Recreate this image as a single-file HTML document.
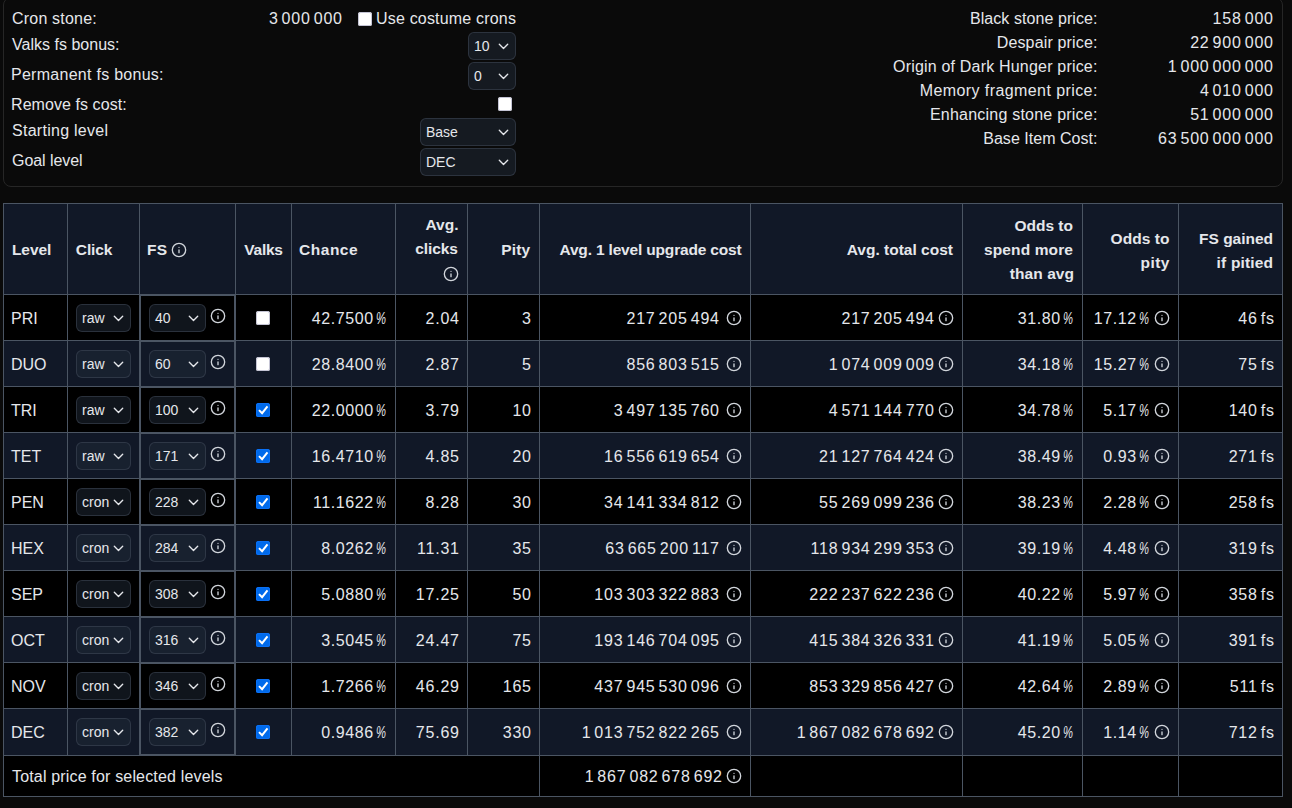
<!DOCTYPE html>
<html><head><meta charset="utf-8"><style>
*{box-sizing:border-box}
html,body{margin:0;padding:0;background:#0a0a0a;width:1292px;height:808px;overflow:hidden}
body{position:relative;font-family:"Liberation Sans",sans-serif;font-size:16px;color:#e5e7eb}
.t{position:absolute;white-space:pre;line-height:24px}
.r{position:absolute}
.n{letter-spacing:0.8px;margin-right:-0.8px}
.sp{display:inline-block;width:3px}
.pc{display:inline-block;width:11.4px;position:relative;height:1em}
.pc b{position:absolute;left:0;top:-1px;font-weight:normal;display:inline-block;transform:scaleX(0.70);transform-origin:left center;letter-spacing:0}
.ic{position:absolute;overflow:visible}
.panel{position:absolute;left:3px;top:-3px;width:1280px;height:190px;border:1px solid #262626;border-radius:8px;background:#0a0a0a}
.sel{position:absolute;border:1px solid rgba(75,85,99,0.45);border-radius:6px;background:rgba(31,41,55,0.5)}
.sel span{position:absolute;left:5px;top:50%;transform:translateY(-50%);line-height:16px;white-space:pre}
.chev{position:absolute;right:5.75px;top:50%;margin-top:-3.5px}
.cb{position:absolute;width:14px;height:14px;background:#fff;border-radius:2.5px;box-shadow:inset 0 0 0 1px #c4c4d4}
.cb.on{background:#006aeb;box-shadow:inset 0 0 0 1px #0a70f5}
.cb svg{position:absolute;left:0;top:0}
</style></head>
<body>
<div class="panel"></div>
<div class="t" style="top:7px;left:12px;letter-spacing:0.200px;">Cron stone:</div>
<div class="t" style="top:33px;left:12px;letter-spacing:0.015px;">Valks fs bonus:</div>
<div class="t" style="top:63px;left:12px;transform:translateX(-1.0px);letter-spacing:0.273px;">Permanent fs bonus:</div>
<div class="t" style="top:93px;left:12px;transform:translateX(-1.0px);letter-spacing:0.071px;">Remove fs cost:</div>
<div class="t" style="top:119px;left:12px;letter-spacing:0.269px;">Starting level</div>
<div class="t" style="top:149px;left:12px;letter-spacing:-0.056px;">Goal level</div>
<div class="t n" style="top:7px;right:950px;">3<i class="sp"></i>000<i class="sp"></i>000</div>
<div class="cb" style="left:358px;top:12px"></div>
<div class="t" style="top:7px;left:377px;transform:translateX(-1.0px);letter-spacing:0.188px;">Use costume crons</div>
<div class="sel" style="left:468px;top:32px;width:48px;height:28px;"><span style="font-size:14px">10</span><svg class="chev" width="11" height="7" viewBox="0 0 11 7"><path d="M1.3 1.3l4.2 4.2 4.2-4.2" fill="none" stroke="#e5e7eb" stroke-width="1.35" stroke-linecap="round" stroke-linejoin="round"/></svg></div>
<div class="sel" style="left:468px;top:62px;width:48px;height:28px;"><span style="font-size:14px">0</span><svg class="chev" width="11" height="7" viewBox="0 0 11 7"><path d="M1.3 1.3l4.2 4.2 4.2-4.2" fill="none" stroke="#e5e7eb" stroke-width="1.35" stroke-linecap="round" stroke-linejoin="round"/></svg></div>
<div class="cb" style="left:498px;top:97px"></div>
<div class="sel" style="left:420px;top:118px;width:96px;height:28px;"><span style="font-size:14px">Base</span><svg class="chev" width="11" height="7" viewBox="0 0 11 7"><path d="M1.3 1.3l4.2 4.2 4.2-4.2" fill="none" stroke="#e5e7eb" stroke-width="1.35" stroke-linecap="round" stroke-linejoin="round"/></svg></div>
<div class="sel" style="left:420px;top:148px;width:96px;height:28px;"><span style="font-size:14px">DEC</span><svg class="chev" width="11" height="7" viewBox="0 0 11 7"><path d="M1.3 1.3l4.2 4.2 4.2-4.2" fill="none" stroke="#e5e7eb" stroke-width="1.35" stroke-linecap="round" stroke-linejoin="round"/></svg></div>
<div class="t" style="top:7px;right:195px;transform:translateX(0.4px);letter-spacing:0.071px;margin-right:-0.071px;">Black stone price:</div>
<div class="t n" style="top:7px;right:19px;">158<i class="sp"></i>000</div>
<div class="t" style="top:31px;right:195px;transform:translateX(0.4px);letter-spacing:0.154px;margin-right:-0.154px;">Despair price:</div>
<div class="t n" style="top:31px;right:19px;">22<i class="sp"></i>900<i class="sp"></i>000</div>
<div class="t" style="top:55px;right:195px;transform:translateX(0.4px);letter-spacing:0.193px;margin-right:-0.193px;">Origin of Dark Hunger price:</div>
<div class="t n" style="top:55px;right:19px;">1<i class="sp"></i>000<i class="sp"></i>000<i class="sp"></i>000</div>
<div class="t" style="top:79px;right:195px;transform:translateX(0.4px);letter-spacing:0.419px;margin-right:-0.419px;">Memory fragment price:</div>
<div class="t n" style="top:79px;right:19px;">4<i class="sp"></i>010<i class="sp"></i>000</div>
<div class="t" style="top:103px;right:195px;transform:translateX(0.4px);letter-spacing:0.223px;margin-right:-0.223px;">Enhancing stone price:</div>
<div class="t n" style="top:103px;right:19px;">51<i class="sp"></i>000<i class="sp"></i>000</div>
<div class="t" style="top:127px;right:195px;transform:translateX(0.4px);letter-spacing:0.022px;margin-right:-0.022px;">Base Item Cost:</div>
<div class="t n" style="top:127px;right:19px;">63<i class="sp"></i>500<i class="sp"></i>000<i class="sp"></i>000</div>
<div class="r" style="left:3px;top:203px;width:1280px;height:91px;background:#111827;"></div>
<div class="r" style="left:3px;top:294px;width:1280px;height:46px;background:#000;"></div>
<div class="r" style="left:3px;top:340px;width:1280px;height:46px;background:#111827;"></div>
<div class="r" style="left:3px;top:386px;width:1280px;height:46px;background:#000;"></div>
<div class="r" style="left:3px;top:432px;width:1280px;height:46px;background:#111827;"></div>
<div class="r" style="left:3px;top:478px;width:1280px;height:46px;background:#000;"></div>
<div class="r" style="left:3px;top:524px;width:1280px;height:46px;background:#111827;"></div>
<div class="r" style="left:3px;top:570px;width:1280px;height:46px;background:#000;"></div>
<div class="r" style="left:3px;top:616px;width:1280px;height:46px;background:#111827;"></div>
<div class="r" style="left:3px;top:662px;width:1280px;height:46px;background:#000;"></div>
<div class="r" style="left:3px;top:708px;width:1280px;height:47px;background:#111827;"></div>
<div class="r" style="left:3px;top:755px;width:1280px;height:41px;background:#000;"></div>
<div class="r" style="left:3px;top:203px;width:1280px;height:1px;background:#4b5563;"></div>
<div class="r" style="left:3px;top:294px;width:1280px;height:1px;background:#4b5563;"></div>
<div class="r" style="left:3px;top:340px;width:1280px;height:1px;background:#4b5563;"></div>
<div class="r" style="left:3px;top:386px;width:1280px;height:1px;background:#4b5563;"></div>
<div class="r" style="left:3px;top:432px;width:1280px;height:1px;background:#4b5563;"></div>
<div class="r" style="left:3px;top:478px;width:1280px;height:1px;background:#4b5563;"></div>
<div class="r" style="left:3px;top:524px;width:1280px;height:1px;background:#4b5563;"></div>
<div class="r" style="left:3px;top:570px;width:1280px;height:1px;background:#4b5563;"></div>
<div class="r" style="left:3px;top:616px;width:1280px;height:1px;background:#4b5563;"></div>
<div class="r" style="left:3px;top:662px;width:1280px;height:1px;background:#4b5563;"></div>
<div class="r" style="left:3px;top:708px;width:1280px;height:1px;background:#4b5563;"></div>
<div class="r" style="left:3px;top:755px;width:1280px;height:1px;background:#4b5563;"></div>
<div class="r" style="left:3px;top:796px;width:1280px;height:1px;background:#4b5563;"></div>
<div class="r" style="left:3px;top:203px;width:1px;height:594px;background:#4b5563;"></div>
<div class="r" style="left:67px;top:203px;width:1px;height:553px;background:#4b5563;"></div>
<div class="r" style="left:139px;top:203px;width:1px;height:553px;background:#4b5563;"></div>
<div class="r" style="left:235px;top:203px;width:1px;height:553px;background:#4b5563;"></div>
<div class="r" style="left:291px;top:203px;width:1px;height:553px;background:#4b5563;"></div>
<div class="r" style="left:395px;top:203px;width:1px;height:553px;background:#4b5563;"></div>
<div class="r" style="left:467px;top:203px;width:1px;height:553px;background:#4b5563;"></div>
<div class="r" style="left:539px;top:203px;width:1px;height:594px;background:#4b5563;"></div>
<div class="r" style="left:750px;top:203px;width:1px;height:594px;background:#4b5563;"></div>
<div class="r" style="left:962px;top:203px;width:1px;height:594px;background:#4b5563;"></div>
<div class="r" style="left:1082px;top:203px;width:1px;height:594px;background:#4b5563;"></div>
<div class="r" style="left:1178px;top:203px;width:1px;height:594px;background:#4b5563;"></div>
<div class="r" style="left:1282px;top:203px;width:1px;height:594px;background:#4b5563;"></div>
<div class="r" style="left:140px;top:295px;width:1px;height:46px;background:#4b5563;"></div>
<div class="r" style="left:234px;top:295px;width:1px;height:46px;background:#4b5563;"></div>
<div class="r" style="left:139px;top:295px;width:97px;height:1px;background:#4b5563;"></div>
<div class="r" style="left:140px;top:341px;width:1px;height:46px;background:#4b5563;"></div>
<div class="r" style="left:234px;top:341px;width:1px;height:46px;background:#4b5563;"></div>
<div class="r" style="left:139px;top:341px;width:97px;height:1px;background:#4b5563;"></div>
<div class="r" style="left:140px;top:387px;width:1px;height:46px;background:#4b5563;"></div>
<div class="r" style="left:234px;top:387px;width:1px;height:46px;background:#4b5563;"></div>
<div class="r" style="left:139px;top:387px;width:97px;height:1px;background:#4b5563;"></div>
<div class="r" style="left:140px;top:433px;width:1px;height:46px;background:#4b5563;"></div>
<div class="r" style="left:234px;top:433px;width:1px;height:46px;background:#4b5563;"></div>
<div class="r" style="left:139px;top:433px;width:97px;height:1px;background:#4b5563;"></div>
<div class="r" style="left:140px;top:479px;width:1px;height:46px;background:#4b5563;"></div>
<div class="r" style="left:234px;top:479px;width:1px;height:46px;background:#4b5563;"></div>
<div class="r" style="left:139px;top:479px;width:97px;height:1px;background:#4b5563;"></div>
<div class="r" style="left:140px;top:525px;width:1px;height:46px;background:#4b5563;"></div>
<div class="r" style="left:234px;top:525px;width:1px;height:46px;background:#4b5563;"></div>
<div class="r" style="left:139px;top:525px;width:97px;height:1px;background:#4b5563;"></div>
<div class="r" style="left:140px;top:571px;width:1px;height:46px;background:#4b5563;"></div>
<div class="r" style="left:234px;top:571px;width:1px;height:46px;background:#4b5563;"></div>
<div class="r" style="left:139px;top:571px;width:97px;height:1px;background:#4b5563;"></div>
<div class="r" style="left:140px;top:617px;width:1px;height:46px;background:#4b5563;"></div>
<div class="r" style="left:234px;top:617px;width:1px;height:46px;background:#4b5563;"></div>
<div class="r" style="left:139px;top:617px;width:97px;height:1px;background:#4b5563;"></div>
<div class="r" style="left:140px;top:663px;width:1px;height:46px;background:#4b5563;"></div>
<div class="r" style="left:234px;top:663px;width:1px;height:46px;background:#4b5563;"></div>
<div class="r" style="left:139px;top:663px;width:97px;height:1px;background:#4b5563;"></div>
<div class="r" style="left:140px;top:709px;width:1px;height:47px;background:#4b5563;"></div>
<div class="r" style="left:234px;top:709px;width:1px;height:47px;background:#4b5563;"></div>
<div class="r" style="left:139px;top:709px;width:97px;height:1px;background:#4b5563;"></div>
<div class="r" style="left:139px;top:754px;width:97px;height:1px;background:#4b5563;"></div>
<div class="t" style="top:238px;left:12px;font-weight:bold;font-size:15.5px;letter-spacing:-0.100px;">Level</div>
<div class="t" style="top:238px;left:76px;font-weight:bold;font-size:15.5px;transform:translateX(-0.2px);letter-spacing:-0.100px;">Click</div>
<div class="t" style="top:238px;left:148px;font-weight:bold;font-size:15.5px;transform:translateX(-0.9px);letter-spacing:0.300px;">FS</div>
<svg class="ic" style="left:171.0px;top:242.0px" width="16" height="16" viewBox="0 0 24 24" fill="none" stroke="#d1d5db" stroke-width="2" stroke-linecap="round" stroke-linejoin="round"><circle cx="12" cy="12" r="10"/><path d="M12 16v-4"/><path d="M12 8h.01"/></svg>
<div class="t" style="top:238px;left:244px;font-weight:bold;font-size:15.5px;transform:translateX(0.3px);letter-spacing:-0.250px;">Valks</div>
<div class="t" style="top:238px;left:300px;font-weight:bold;font-size:15.5px;transform:translateX(-0.9px);letter-spacing:0.500px;">Chance</div>
<div class="t" style="top:213px;right:833px;font-weight:bold;font-size:15.5px;transform:translateX(-0.4px);letter-spacing:0.066px;margin-right:-0.066px;">Avg.</div>
<div class="t" style="top:237px;right:833px;font-weight:bold;font-size:15.5px;transform:translateX(-1.0px);letter-spacing:-0.080px;margin-right:0.080px;">clicks</div>
<svg class="ic" style="left:443.0px;top:266.0px" width="16" height="16" viewBox="0 0 24 24" fill="none" stroke="#d1d5db" stroke-width="2" stroke-linecap="round" stroke-linejoin="round"><circle cx="12" cy="12" r="10"/><path d="M12 16v-4"/><path d="M12 8h.01"/></svg>
<div class="t" style="top:238px;right:761px;font-weight:bold;font-size:15.5px;transform:translateX(-0.8px);letter-spacing:0.200px;margin-right:-0.200px;">Pity</div>
<div class="t" style="top:238px;right:550px;font-weight:bold;font-size:15.5px;transform:translateX(-0.3px);letter-spacing:-0.171px;margin-right:0.171px;">Avg. 1 level upgrade cost</div>
<div class="t" style="top:238px;right:338px;font-weight:bold;font-size:15.5px;transform:translateX(-1.0px);letter-spacing:0.008px;margin-right:-0.008px;">Avg. total cost</div>
<div class="t" style="top:214px;right:218px;font-weight:bold;font-size:15.5px;transform:translateX(-1.0px);">Odds to</div>
<div class="t" style="top:238px;right:218px;font-weight:bold;font-size:15.5px;transform:translateX(-1.0px);letter-spacing:0.133px;margin-right:-0.133px;">spend more</div>
<div class="t" style="top:262px;right:218px;font-weight:bold;font-size:15.5px;letter-spacing:0.056px;margin-right:-0.056px;">than avg</div>
<div class="t" style="top:227px;right:122px;font-weight:bold;font-size:15.5px;transform:translateX(-0.5px);letter-spacing:0.067px;margin-right:-0.067px;">Odds to</div>
<div class="t" style="top:251px;right:122px;font-weight:bold;font-size:15.5px;transform:translateX(-0.5px);letter-spacing:0.500px;margin-right:-0.500px;">pity</div>
<div class="t" style="top:227px;right:18px;font-weight:bold;font-size:15.5px;transform:translateX(-0.9px);">FS gained</div>
<div class="t" style="top:251px;right:18px;font-weight:bold;font-size:15.5px;transform:translateX(-0.9px);letter-spacing:0.175px;margin-right:-0.175px;">if pitied</div>
<div class="t" style="top:307px;left:11px;">PRI</div>
<div class="sel" style="left:76px;top:304px;width:55px;height:28px;"><span style="font-size:14px">raw</span><svg class="chev" width="11" height="7" viewBox="0 0 11 7"><path d="M1.3 1.3l4.2 4.2 4.2-4.2" fill="none" stroke="#e5e7eb" stroke-width="1.35" stroke-linecap="round" stroke-linejoin="round"/></svg></div>
<div class="sel" style="left:149px;top:304px;width:57px;height:28px;"><span style="font-size:14px">40</span><svg class="chev" width="11" height="7" viewBox="0 0 11 7"><path d="M1.3 1.3l4.2 4.2 4.2-4.2" fill="none" stroke="#e5e7eb" stroke-width="1.35" stroke-linecap="round" stroke-linejoin="round"/></svg></div>
<svg class="ic" style="left:210.0px;top:308.0px" width="16" height="16" viewBox="0 0 24 24" fill="none" stroke="#d1d5db" stroke-width="2" stroke-linecap="round" stroke-linejoin="round"><circle cx="12" cy="12" r="10"/><path d="M12 16v-4"/><path d="M12 8h.01"/></svg>
<div class="cb" style="left:256px;top:311px"></div>
<div class="t n" style="top:307px;right:905px;letter-spacing:0.6px;margin-right:-0.6px;">42.7500<i class="sp" style="width:2.4px"></i><i class="pc"><b>%</b></i></div>
<div class="t n" style="top:307px;right:833px;">2.04</div>
<div class="t n" style="top:307px;right:761px;">3</div>
<div class="t n" style="top:307px;right:573px;">217<i class="sp"></i>205<i class="sp"></i>494</div>
<svg class="ic" style="left:726.0px;top:310.0px" width="16" height="16" viewBox="0 0 24 24" fill="none" stroke="#d1d5db" stroke-width="2" stroke-linecap="round" stroke-linejoin="round"><circle cx="12" cy="12" r="10"/><path d="M12 16v-4"/><path d="M12 8h.01"/></svg>
<div class="t n" style="top:307px;right:358px;">217<i class="sp"></i>205<i class="sp"></i>494</div>
<svg class="ic" style="left:938.0px;top:310.0px" width="16" height="16" viewBox="0 0 24 24" fill="none" stroke="#d1d5db" stroke-width="2" stroke-linecap="round" stroke-linejoin="round"><circle cx="12" cy="12" r="10"/><path d="M12 16v-4"/><path d="M12 8h.01"/></svg>
<div class="t n" style="top:307px;right:218px;letter-spacing:0.6px;margin-right:-0.6px;">31.80<i class="sp" style="width:2.4px"></i><i class="pc"><b>%</b></i></div>
<div class="t n" style="top:307px;right:142px;letter-spacing:0.6px;margin-right:-0.6px;">17.12<i class="sp" style="width:2.4px"></i><i class="pc"><b>%</b></i></div>
<svg class="ic" style="left:1154.0px;top:310.0px" width="16" height="16" viewBox="0 0 24 24" fill="none" stroke="#d1d5db" stroke-width="2" stroke-linecap="round" stroke-linejoin="round"><circle cx="12" cy="12" r="10"/><path d="M12 16v-4"/><path d="M12 8h.01"/></svg>
<div class="t n" style="top:307px;right:18px;">46<i class="sp"></i>fs</div>
<div class="t" style="top:353px;left:11px;">DUO</div>
<div class="sel" style="left:76px;top:350px;width:55px;height:28px;"><span style="font-size:14px">raw</span><svg class="chev" width="11" height="7" viewBox="0 0 11 7"><path d="M1.3 1.3l4.2 4.2 4.2-4.2" fill="none" stroke="#e5e7eb" stroke-width="1.35" stroke-linecap="round" stroke-linejoin="round"/></svg></div>
<div class="sel" style="left:149px;top:350px;width:57px;height:28px;"><span style="font-size:14px">60</span><svg class="chev" width="11" height="7" viewBox="0 0 11 7"><path d="M1.3 1.3l4.2 4.2 4.2-4.2" fill="none" stroke="#e5e7eb" stroke-width="1.35" stroke-linecap="round" stroke-linejoin="round"/></svg></div>
<svg class="ic" style="left:210.0px;top:354.0px" width="16" height="16" viewBox="0 0 24 24" fill="none" stroke="#d1d5db" stroke-width="2" stroke-linecap="round" stroke-linejoin="round"><circle cx="12" cy="12" r="10"/><path d="M12 16v-4"/><path d="M12 8h.01"/></svg>
<div class="cb" style="left:256px;top:357px"></div>
<div class="t n" style="top:353px;right:905px;letter-spacing:0.6px;margin-right:-0.6px;">28.8400<i class="sp" style="width:2.4px"></i><i class="pc"><b>%</b></i></div>
<div class="t n" style="top:353px;right:833px;">2.87</div>
<div class="t n" style="top:353px;right:761px;">5</div>
<div class="t n" style="top:353px;right:573px;">856<i class="sp"></i>803<i class="sp"></i>515</div>
<svg class="ic" style="left:726.0px;top:356.0px" width="16" height="16" viewBox="0 0 24 24" fill="none" stroke="#d1d5db" stroke-width="2" stroke-linecap="round" stroke-linejoin="round"><circle cx="12" cy="12" r="10"/><path d="M12 16v-4"/><path d="M12 8h.01"/></svg>
<div class="t n" style="top:353px;right:358px;">1<i class="sp"></i>074<i class="sp"></i>009<i class="sp"></i>009</div>
<svg class="ic" style="left:938.0px;top:356.0px" width="16" height="16" viewBox="0 0 24 24" fill="none" stroke="#d1d5db" stroke-width="2" stroke-linecap="round" stroke-linejoin="round"><circle cx="12" cy="12" r="10"/><path d="M12 16v-4"/><path d="M12 8h.01"/></svg>
<div class="t n" style="top:353px;right:218px;letter-spacing:0.6px;margin-right:-0.6px;">34.18<i class="sp" style="width:2.4px"></i><i class="pc"><b>%</b></i></div>
<div class="t n" style="top:353px;right:142px;letter-spacing:0.6px;margin-right:-0.6px;">15.27<i class="sp" style="width:2.4px"></i><i class="pc"><b>%</b></i></div>
<svg class="ic" style="left:1154.0px;top:356.0px" width="16" height="16" viewBox="0 0 24 24" fill="none" stroke="#d1d5db" stroke-width="2" stroke-linecap="round" stroke-linejoin="round"><circle cx="12" cy="12" r="10"/><path d="M12 16v-4"/><path d="M12 8h.01"/></svg>
<div class="t n" style="top:353px;right:18px;">75<i class="sp"></i>fs</div>
<div class="t" style="top:399px;left:11px;">TRI</div>
<div class="sel" style="left:76px;top:396px;width:55px;height:28px;"><span style="font-size:14px">raw</span><svg class="chev" width="11" height="7" viewBox="0 0 11 7"><path d="M1.3 1.3l4.2 4.2 4.2-4.2" fill="none" stroke="#e5e7eb" stroke-width="1.35" stroke-linecap="round" stroke-linejoin="round"/></svg></div>
<div class="sel" style="left:149px;top:396px;width:57px;height:28px;"><span style="font-size:14px">100</span><svg class="chev" width="11" height="7" viewBox="0 0 11 7"><path d="M1.3 1.3l4.2 4.2 4.2-4.2" fill="none" stroke="#e5e7eb" stroke-width="1.35" stroke-linecap="round" stroke-linejoin="round"/></svg></div>
<svg class="ic" style="left:210.0px;top:400.0px" width="16" height="16" viewBox="0 0 24 24" fill="none" stroke="#d1d5db" stroke-width="2" stroke-linecap="round" stroke-linejoin="round"><circle cx="12" cy="12" r="10"/><path d="M12 16v-4"/><path d="M12 8h.01"/></svg>
<div class="cb on" style="left:256px;top:403px"><svg width="14" height="14" viewBox="0 0 14 14"><path d="M3 7.1l3.1 3.1 5.4-6.8" fill="none" stroke="#fff" stroke-width="2" stroke-linecap="butt" stroke-linejoin="miter"/></svg></div>
<div class="t n" style="top:399px;right:905px;letter-spacing:0.6px;margin-right:-0.6px;">22.0000<i class="sp" style="width:2.4px"></i><i class="pc"><b>%</b></i></div>
<div class="t n" style="top:399px;right:833px;">3.79</div>
<div class="t n" style="top:399px;right:761px;">10</div>
<div class="t n" style="top:399px;right:573px;">3<i class="sp"></i>497<i class="sp"></i>135<i class="sp"></i>760</div>
<svg class="ic" style="left:726.0px;top:402.0px" width="16" height="16" viewBox="0 0 24 24" fill="none" stroke="#d1d5db" stroke-width="2" stroke-linecap="round" stroke-linejoin="round"><circle cx="12" cy="12" r="10"/><path d="M12 16v-4"/><path d="M12 8h.01"/></svg>
<div class="t n" style="top:399px;right:358px;">4<i class="sp"></i>571<i class="sp"></i>144<i class="sp"></i>770</div>
<svg class="ic" style="left:938.0px;top:402.0px" width="16" height="16" viewBox="0 0 24 24" fill="none" stroke="#d1d5db" stroke-width="2" stroke-linecap="round" stroke-linejoin="round"><circle cx="12" cy="12" r="10"/><path d="M12 16v-4"/><path d="M12 8h.01"/></svg>
<div class="t n" style="top:399px;right:218px;letter-spacing:0.6px;margin-right:-0.6px;">34.78<i class="sp" style="width:2.4px"></i><i class="pc"><b>%</b></i></div>
<div class="t n" style="top:399px;right:142px;letter-spacing:0.6px;margin-right:-0.6px;">5.17<i class="sp" style="width:2.4px"></i><i class="pc"><b>%</b></i></div>
<svg class="ic" style="left:1154.0px;top:402.0px" width="16" height="16" viewBox="0 0 24 24" fill="none" stroke="#d1d5db" stroke-width="2" stroke-linecap="round" stroke-linejoin="round"><circle cx="12" cy="12" r="10"/><path d="M12 16v-4"/><path d="M12 8h.01"/></svg>
<div class="t n" style="top:399px;right:18px;">140<i class="sp"></i>fs</div>
<div class="t" style="top:445px;left:11px;">TET</div>
<div class="sel" style="left:76px;top:442px;width:55px;height:28px;"><span style="font-size:14px">raw</span><svg class="chev" width="11" height="7" viewBox="0 0 11 7"><path d="M1.3 1.3l4.2 4.2 4.2-4.2" fill="none" stroke="#e5e7eb" stroke-width="1.35" stroke-linecap="round" stroke-linejoin="round"/></svg></div>
<div class="sel" style="left:149px;top:442px;width:57px;height:28px;"><span style="font-size:14px">171</span><svg class="chev" width="11" height="7" viewBox="0 0 11 7"><path d="M1.3 1.3l4.2 4.2 4.2-4.2" fill="none" stroke="#e5e7eb" stroke-width="1.35" stroke-linecap="round" stroke-linejoin="round"/></svg></div>
<svg class="ic" style="left:210.0px;top:446.0px" width="16" height="16" viewBox="0 0 24 24" fill="none" stroke="#d1d5db" stroke-width="2" stroke-linecap="round" stroke-linejoin="round"><circle cx="12" cy="12" r="10"/><path d="M12 16v-4"/><path d="M12 8h.01"/></svg>
<div class="cb on" style="left:256px;top:449px"><svg width="14" height="14" viewBox="0 0 14 14"><path d="M3 7.1l3.1 3.1 5.4-6.8" fill="none" stroke="#fff" stroke-width="2" stroke-linecap="butt" stroke-linejoin="miter"/></svg></div>
<div class="t n" style="top:445px;right:905px;letter-spacing:0.6px;margin-right:-0.6px;">16.4710<i class="sp" style="width:2.4px"></i><i class="pc"><b>%</b></i></div>
<div class="t n" style="top:445px;right:833px;">4.85</div>
<div class="t n" style="top:445px;right:761px;">20</div>
<div class="t n" style="top:445px;right:573px;">16<i class="sp"></i>556<i class="sp"></i>619<i class="sp"></i>654</div>
<svg class="ic" style="left:726.0px;top:448.0px" width="16" height="16" viewBox="0 0 24 24" fill="none" stroke="#d1d5db" stroke-width="2" stroke-linecap="round" stroke-linejoin="round"><circle cx="12" cy="12" r="10"/><path d="M12 16v-4"/><path d="M12 8h.01"/></svg>
<div class="t n" style="top:445px;right:358px;">21<i class="sp"></i>127<i class="sp"></i>764<i class="sp"></i>424</div>
<svg class="ic" style="left:938.0px;top:448.0px" width="16" height="16" viewBox="0 0 24 24" fill="none" stroke="#d1d5db" stroke-width="2" stroke-linecap="round" stroke-linejoin="round"><circle cx="12" cy="12" r="10"/><path d="M12 16v-4"/><path d="M12 8h.01"/></svg>
<div class="t n" style="top:445px;right:218px;letter-spacing:0.6px;margin-right:-0.6px;">38.49<i class="sp" style="width:2.4px"></i><i class="pc"><b>%</b></i></div>
<div class="t n" style="top:445px;right:142px;letter-spacing:0.6px;margin-right:-0.6px;">0.93<i class="sp" style="width:2.4px"></i><i class="pc"><b>%</b></i></div>
<svg class="ic" style="left:1154.0px;top:448.0px" width="16" height="16" viewBox="0 0 24 24" fill="none" stroke="#d1d5db" stroke-width="2" stroke-linecap="round" stroke-linejoin="round"><circle cx="12" cy="12" r="10"/><path d="M12 16v-4"/><path d="M12 8h.01"/></svg>
<div class="t n" style="top:445px;right:18px;">271<i class="sp"></i>fs</div>
<div class="t" style="top:491px;left:11px;">PEN</div>
<div class="sel" style="left:76px;top:488px;width:55px;height:28px;"><span style="font-size:14px">cron</span><svg class="chev" width="11" height="7" viewBox="0 0 11 7"><path d="M1.3 1.3l4.2 4.2 4.2-4.2" fill="none" stroke="#e5e7eb" stroke-width="1.35" stroke-linecap="round" stroke-linejoin="round"/></svg></div>
<div class="sel" style="left:149px;top:488px;width:57px;height:28px;"><span style="font-size:14px">228</span><svg class="chev" width="11" height="7" viewBox="0 0 11 7"><path d="M1.3 1.3l4.2 4.2 4.2-4.2" fill="none" stroke="#e5e7eb" stroke-width="1.35" stroke-linecap="round" stroke-linejoin="round"/></svg></div>
<svg class="ic" style="left:210.0px;top:492.0px" width="16" height="16" viewBox="0 0 24 24" fill="none" stroke="#d1d5db" stroke-width="2" stroke-linecap="round" stroke-linejoin="round"><circle cx="12" cy="12" r="10"/><path d="M12 16v-4"/><path d="M12 8h.01"/></svg>
<div class="cb on" style="left:256px;top:495px"><svg width="14" height="14" viewBox="0 0 14 14"><path d="M3 7.1l3.1 3.1 5.4-6.8" fill="none" stroke="#fff" stroke-width="2" stroke-linecap="butt" stroke-linejoin="miter"/></svg></div>
<div class="t n" style="top:491px;right:905px;letter-spacing:0.6px;margin-right:-0.6px;">11.1622<i class="sp" style="width:2.4px"></i><i class="pc"><b>%</b></i></div>
<div class="t n" style="top:491px;right:833px;">8.28</div>
<div class="t n" style="top:491px;right:761px;">30</div>
<div class="t n" style="top:491px;right:573px;">34<i class="sp"></i>141<i class="sp"></i>334<i class="sp"></i>812</div>
<svg class="ic" style="left:726.0px;top:494.0px" width="16" height="16" viewBox="0 0 24 24" fill="none" stroke="#d1d5db" stroke-width="2" stroke-linecap="round" stroke-linejoin="round"><circle cx="12" cy="12" r="10"/><path d="M12 16v-4"/><path d="M12 8h.01"/></svg>
<div class="t n" style="top:491px;right:358px;">55<i class="sp"></i>269<i class="sp"></i>099<i class="sp"></i>236</div>
<svg class="ic" style="left:938.0px;top:494.0px" width="16" height="16" viewBox="0 0 24 24" fill="none" stroke="#d1d5db" stroke-width="2" stroke-linecap="round" stroke-linejoin="round"><circle cx="12" cy="12" r="10"/><path d="M12 16v-4"/><path d="M12 8h.01"/></svg>
<div class="t n" style="top:491px;right:218px;letter-spacing:0.6px;margin-right:-0.6px;">38.23<i class="sp" style="width:2.4px"></i><i class="pc"><b>%</b></i></div>
<div class="t n" style="top:491px;right:142px;letter-spacing:0.6px;margin-right:-0.6px;">2.28<i class="sp" style="width:2.4px"></i><i class="pc"><b>%</b></i></div>
<svg class="ic" style="left:1154.0px;top:494.0px" width="16" height="16" viewBox="0 0 24 24" fill="none" stroke="#d1d5db" stroke-width="2" stroke-linecap="round" stroke-linejoin="round"><circle cx="12" cy="12" r="10"/><path d="M12 16v-4"/><path d="M12 8h.01"/></svg>
<div class="t n" style="top:491px;right:18px;">258<i class="sp"></i>fs</div>
<div class="t" style="top:537px;left:11px;">HEX</div>
<div class="sel" style="left:76px;top:534px;width:55px;height:28px;"><span style="font-size:14px">cron</span><svg class="chev" width="11" height="7" viewBox="0 0 11 7"><path d="M1.3 1.3l4.2 4.2 4.2-4.2" fill="none" stroke="#e5e7eb" stroke-width="1.35" stroke-linecap="round" stroke-linejoin="round"/></svg></div>
<div class="sel" style="left:149px;top:534px;width:57px;height:28px;"><span style="font-size:14px">284</span><svg class="chev" width="11" height="7" viewBox="0 0 11 7"><path d="M1.3 1.3l4.2 4.2 4.2-4.2" fill="none" stroke="#e5e7eb" stroke-width="1.35" stroke-linecap="round" stroke-linejoin="round"/></svg></div>
<svg class="ic" style="left:210.0px;top:538.0px" width="16" height="16" viewBox="0 0 24 24" fill="none" stroke="#d1d5db" stroke-width="2" stroke-linecap="round" stroke-linejoin="round"><circle cx="12" cy="12" r="10"/><path d="M12 16v-4"/><path d="M12 8h.01"/></svg>
<div class="cb on" style="left:256px;top:541px"><svg width="14" height="14" viewBox="0 0 14 14"><path d="M3 7.1l3.1 3.1 5.4-6.8" fill="none" stroke="#fff" stroke-width="2" stroke-linecap="butt" stroke-linejoin="miter"/></svg></div>
<div class="t n" style="top:537px;right:905px;letter-spacing:0.6px;margin-right:-0.6px;">8.0262<i class="sp" style="width:2.4px"></i><i class="pc"><b>%</b></i></div>
<div class="t n" style="top:537px;right:833px;">11.31</div>
<div class="t n" style="top:537px;right:761px;">35</div>
<div class="t n" style="top:537px;right:573px;">63<i class="sp"></i>665<i class="sp"></i>200<i class="sp"></i>117</div>
<svg class="ic" style="left:726.0px;top:540.0px" width="16" height="16" viewBox="0 0 24 24" fill="none" stroke="#d1d5db" stroke-width="2" stroke-linecap="round" stroke-linejoin="round"><circle cx="12" cy="12" r="10"/><path d="M12 16v-4"/><path d="M12 8h.01"/></svg>
<div class="t n" style="top:537px;right:358px;">118<i class="sp"></i>934<i class="sp"></i>299<i class="sp"></i>353</div>
<svg class="ic" style="left:938.0px;top:540.0px" width="16" height="16" viewBox="0 0 24 24" fill="none" stroke="#d1d5db" stroke-width="2" stroke-linecap="round" stroke-linejoin="round"><circle cx="12" cy="12" r="10"/><path d="M12 16v-4"/><path d="M12 8h.01"/></svg>
<div class="t n" style="top:537px;right:218px;letter-spacing:0.6px;margin-right:-0.6px;">39.19<i class="sp" style="width:2.4px"></i><i class="pc"><b>%</b></i></div>
<div class="t n" style="top:537px;right:142px;letter-spacing:0.6px;margin-right:-0.6px;">4.48<i class="sp" style="width:2.4px"></i><i class="pc"><b>%</b></i></div>
<svg class="ic" style="left:1154.0px;top:540.0px" width="16" height="16" viewBox="0 0 24 24" fill="none" stroke="#d1d5db" stroke-width="2" stroke-linecap="round" stroke-linejoin="round"><circle cx="12" cy="12" r="10"/><path d="M12 16v-4"/><path d="M12 8h.01"/></svg>
<div class="t n" style="top:537px;right:18px;">319<i class="sp"></i>fs</div>
<div class="t" style="top:583px;left:11px;">SEP</div>
<div class="sel" style="left:76px;top:580px;width:55px;height:28px;"><span style="font-size:14px">cron</span><svg class="chev" width="11" height="7" viewBox="0 0 11 7"><path d="M1.3 1.3l4.2 4.2 4.2-4.2" fill="none" stroke="#e5e7eb" stroke-width="1.35" stroke-linecap="round" stroke-linejoin="round"/></svg></div>
<div class="sel" style="left:149px;top:580px;width:57px;height:28px;"><span style="font-size:14px">308</span><svg class="chev" width="11" height="7" viewBox="0 0 11 7"><path d="M1.3 1.3l4.2 4.2 4.2-4.2" fill="none" stroke="#e5e7eb" stroke-width="1.35" stroke-linecap="round" stroke-linejoin="round"/></svg></div>
<svg class="ic" style="left:210.0px;top:584.0px" width="16" height="16" viewBox="0 0 24 24" fill="none" stroke="#d1d5db" stroke-width="2" stroke-linecap="round" stroke-linejoin="round"><circle cx="12" cy="12" r="10"/><path d="M12 16v-4"/><path d="M12 8h.01"/></svg>
<div class="cb on" style="left:256px;top:587px"><svg width="14" height="14" viewBox="0 0 14 14"><path d="M3 7.1l3.1 3.1 5.4-6.8" fill="none" stroke="#fff" stroke-width="2" stroke-linecap="butt" stroke-linejoin="miter"/></svg></div>
<div class="t n" style="top:583px;right:905px;letter-spacing:0.6px;margin-right:-0.6px;">5.0880<i class="sp" style="width:2.4px"></i><i class="pc"><b>%</b></i></div>
<div class="t n" style="top:583px;right:833px;">17.25</div>
<div class="t n" style="top:583px;right:761px;">50</div>
<div class="t n" style="top:583px;right:573px;">103<i class="sp"></i>303<i class="sp"></i>322<i class="sp"></i>883</div>
<svg class="ic" style="left:726.0px;top:586.0px" width="16" height="16" viewBox="0 0 24 24" fill="none" stroke="#d1d5db" stroke-width="2" stroke-linecap="round" stroke-linejoin="round"><circle cx="12" cy="12" r="10"/><path d="M12 16v-4"/><path d="M12 8h.01"/></svg>
<div class="t n" style="top:583px;right:358px;">222<i class="sp"></i>237<i class="sp"></i>622<i class="sp"></i>236</div>
<svg class="ic" style="left:938.0px;top:586.0px" width="16" height="16" viewBox="0 0 24 24" fill="none" stroke="#d1d5db" stroke-width="2" stroke-linecap="round" stroke-linejoin="round"><circle cx="12" cy="12" r="10"/><path d="M12 16v-4"/><path d="M12 8h.01"/></svg>
<div class="t n" style="top:583px;right:218px;letter-spacing:0.6px;margin-right:-0.6px;">40.22<i class="sp" style="width:2.4px"></i><i class="pc"><b>%</b></i></div>
<div class="t n" style="top:583px;right:142px;letter-spacing:0.6px;margin-right:-0.6px;">5.97<i class="sp" style="width:2.4px"></i><i class="pc"><b>%</b></i></div>
<svg class="ic" style="left:1154.0px;top:586.0px" width="16" height="16" viewBox="0 0 24 24" fill="none" stroke="#d1d5db" stroke-width="2" stroke-linecap="round" stroke-linejoin="round"><circle cx="12" cy="12" r="10"/><path d="M12 16v-4"/><path d="M12 8h.01"/></svg>
<div class="t n" style="top:583px;right:18px;">358<i class="sp"></i>fs</div>
<div class="t" style="top:629px;left:11px;">OCT</div>
<div class="sel" style="left:76px;top:626px;width:55px;height:28px;"><span style="font-size:14px">cron</span><svg class="chev" width="11" height="7" viewBox="0 0 11 7"><path d="M1.3 1.3l4.2 4.2 4.2-4.2" fill="none" stroke="#e5e7eb" stroke-width="1.35" stroke-linecap="round" stroke-linejoin="round"/></svg></div>
<div class="sel" style="left:149px;top:626px;width:57px;height:28px;"><span style="font-size:14px">316</span><svg class="chev" width="11" height="7" viewBox="0 0 11 7"><path d="M1.3 1.3l4.2 4.2 4.2-4.2" fill="none" stroke="#e5e7eb" stroke-width="1.35" stroke-linecap="round" stroke-linejoin="round"/></svg></div>
<svg class="ic" style="left:210.0px;top:630.0px" width="16" height="16" viewBox="0 0 24 24" fill="none" stroke="#d1d5db" stroke-width="2" stroke-linecap="round" stroke-linejoin="round"><circle cx="12" cy="12" r="10"/><path d="M12 16v-4"/><path d="M12 8h.01"/></svg>
<div class="cb on" style="left:256px;top:633px"><svg width="14" height="14" viewBox="0 0 14 14"><path d="M3 7.1l3.1 3.1 5.4-6.8" fill="none" stroke="#fff" stroke-width="2" stroke-linecap="butt" stroke-linejoin="miter"/></svg></div>
<div class="t n" style="top:629px;right:905px;letter-spacing:0.6px;margin-right:-0.6px;">3.5045<i class="sp" style="width:2.4px"></i><i class="pc"><b>%</b></i></div>
<div class="t n" style="top:629px;right:833px;">24.47</div>
<div class="t n" style="top:629px;right:761px;">75</div>
<div class="t n" style="top:629px;right:573px;">193<i class="sp"></i>146<i class="sp"></i>704<i class="sp"></i>095</div>
<svg class="ic" style="left:726.0px;top:632.0px" width="16" height="16" viewBox="0 0 24 24" fill="none" stroke="#d1d5db" stroke-width="2" stroke-linecap="round" stroke-linejoin="round"><circle cx="12" cy="12" r="10"/><path d="M12 16v-4"/><path d="M12 8h.01"/></svg>
<div class="t n" style="top:629px;right:358px;">415<i class="sp"></i>384<i class="sp"></i>326<i class="sp"></i>331</div>
<svg class="ic" style="left:938.0px;top:632.0px" width="16" height="16" viewBox="0 0 24 24" fill="none" stroke="#d1d5db" stroke-width="2" stroke-linecap="round" stroke-linejoin="round"><circle cx="12" cy="12" r="10"/><path d="M12 16v-4"/><path d="M12 8h.01"/></svg>
<div class="t n" style="top:629px;right:218px;letter-spacing:0.6px;margin-right:-0.6px;">41.19<i class="sp" style="width:2.4px"></i><i class="pc"><b>%</b></i></div>
<div class="t n" style="top:629px;right:142px;letter-spacing:0.6px;margin-right:-0.6px;">5.05<i class="sp" style="width:2.4px"></i><i class="pc"><b>%</b></i></div>
<svg class="ic" style="left:1154.0px;top:632.0px" width="16" height="16" viewBox="0 0 24 24" fill="none" stroke="#d1d5db" stroke-width="2" stroke-linecap="round" stroke-linejoin="round"><circle cx="12" cy="12" r="10"/><path d="M12 16v-4"/><path d="M12 8h.01"/></svg>
<div class="t n" style="top:629px;right:18px;">391<i class="sp"></i>fs</div>
<div class="t" style="top:675px;left:11px;">NOV</div>
<div class="sel" style="left:76px;top:672px;width:55px;height:28px;"><span style="font-size:14px">cron</span><svg class="chev" width="11" height="7" viewBox="0 0 11 7"><path d="M1.3 1.3l4.2 4.2 4.2-4.2" fill="none" stroke="#e5e7eb" stroke-width="1.35" stroke-linecap="round" stroke-linejoin="round"/></svg></div>
<div class="sel" style="left:149px;top:672px;width:57px;height:28px;"><span style="font-size:14px">346</span><svg class="chev" width="11" height="7" viewBox="0 0 11 7"><path d="M1.3 1.3l4.2 4.2 4.2-4.2" fill="none" stroke="#e5e7eb" stroke-width="1.35" stroke-linecap="round" stroke-linejoin="round"/></svg></div>
<svg class="ic" style="left:210.0px;top:676.0px" width="16" height="16" viewBox="0 0 24 24" fill="none" stroke="#d1d5db" stroke-width="2" stroke-linecap="round" stroke-linejoin="round"><circle cx="12" cy="12" r="10"/><path d="M12 16v-4"/><path d="M12 8h.01"/></svg>
<div class="cb on" style="left:256px;top:679px"><svg width="14" height="14" viewBox="0 0 14 14"><path d="M3 7.1l3.1 3.1 5.4-6.8" fill="none" stroke="#fff" stroke-width="2" stroke-linecap="butt" stroke-linejoin="miter"/></svg></div>
<div class="t n" style="top:675px;right:905px;letter-spacing:0.6px;margin-right:-0.6px;">1.7266<i class="sp" style="width:2.4px"></i><i class="pc"><b>%</b></i></div>
<div class="t n" style="top:675px;right:833px;">46.29</div>
<div class="t n" style="top:675px;right:761px;">165</div>
<div class="t n" style="top:675px;right:573px;">437<i class="sp"></i>945<i class="sp"></i>530<i class="sp"></i>096</div>
<svg class="ic" style="left:726.0px;top:678.0px" width="16" height="16" viewBox="0 0 24 24" fill="none" stroke="#d1d5db" stroke-width="2" stroke-linecap="round" stroke-linejoin="round"><circle cx="12" cy="12" r="10"/><path d="M12 16v-4"/><path d="M12 8h.01"/></svg>
<div class="t n" style="top:675px;right:358px;">853<i class="sp"></i>329<i class="sp"></i>856<i class="sp"></i>427</div>
<svg class="ic" style="left:938.0px;top:678.0px" width="16" height="16" viewBox="0 0 24 24" fill="none" stroke="#d1d5db" stroke-width="2" stroke-linecap="round" stroke-linejoin="round"><circle cx="12" cy="12" r="10"/><path d="M12 16v-4"/><path d="M12 8h.01"/></svg>
<div class="t n" style="top:675px;right:218px;letter-spacing:0.6px;margin-right:-0.6px;">42.64<i class="sp" style="width:2.4px"></i><i class="pc"><b>%</b></i></div>
<div class="t n" style="top:675px;right:142px;letter-spacing:0.6px;margin-right:-0.6px;">2.89<i class="sp" style="width:2.4px"></i><i class="pc"><b>%</b></i></div>
<svg class="ic" style="left:1154.0px;top:678.0px" width="16" height="16" viewBox="0 0 24 24" fill="none" stroke="#d1d5db" stroke-width="2" stroke-linecap="round" stroke-linejoin="round"><circle cx="12" cy="12" r="10"/><path d="M12 16v-4"/><path d="M12 8h.01"/></svg>
<div class="t n" style="top:675px;right:18px;">511<i class="sp"></i>fs</div>
<div class="t" style="top:721px;left:11px;">DEC</div>
<div class="sel" style="left:76px;top:718px;width:55px;height:28px;"><span style="font-size:14px">cron</span><svg class="chev" width="11" height="7" viewBox="0 0 11 7"><path d="M1.3 1.3l4.2 4.2 4.2-4.2" fill="none" stroke="#e5e7eb" stroke-width="1.35" stroke-linecap="round" stroke-linejoin="round"/></svg></div>
<div class="sel" style="left:149px;top:718px;width:57px;height:28px;"><span style="font-size:14px">382</span><svg class="chev" width="11" height="7" viewBox="0 0 11 7"><path d="M1.3 1.3l4.2 4.2 4.2-4.2" fill="none" stroke="#e5e7eb" stroke-width="1.35" stroke-linecap="round" stroke-linejoin="round"/></svg></div>
<svg class="ic" style="left:210.0px;top:722.0px" width="16" height="16" viewBox="0 0 24 24" fill="none" stroke="#d1d5db" stroke-width="2" stroke-linecap="round" stroke-linejoin="round"><circle cx="12" cy="12" r="10"/><path d="M12 16v-4"/><path d="M12 8h.01"/></svg>
<div class="cb on" style="left:256px;top:725px"><svg width="14" height="14" viewBox="0 0 14 14"><path d="M3 7.1l3.1 3.1 5.4-6.8" fill="none" stroke="#fff" stroke-width="2" stroke-linecap="butt" stroke-linejoin="miter"/></svg></div>
<div class="t n" style="top:721px;right:905px;letter-spacing:0.6px;margin-right:-0.6px;">0.9486<i class="sp" style="width:2.4px"></i><i class="pc"><b>%</b></i></div>
<div class="t n" style="top:721px;right:833px;">75.69</div>
<div class="t n" style="top:721px;right:761px;">330</div>
<div class="t n" style="top:721px;right:573px;">1<i class="sp"></i>013<i class="sp"></i>752<i class="sp"></i>822<i class="sp"></i>265</div>
<svg class="ic" style="left:726.0px;top:724.0px" width="16" height="16" viewBox="0 0 24 24" fill="none" stroke="#d1d5db" stroke-width="2" stroke-linecap="round" stroke-linejoin="round"><circle cx="12" cy="12" r="10"/><path d="M12 16v-4"/><path d="M12 8h.01"/></svg>
<div class="t n" style="top:721px;right:358px;">1<i class="sp"></i>867<i class="sp"></i>082<i class="sp"></i>678<i class="sp"></i>692</div>
<svg class="ic" style="left:938.0px;top:724.0px" width="16" height="16" viewBox="0 0 24 24" fill="none" stroke="#d1d5db" stroke-width="2" stroke-linecap="round" stroke-linejoin="round"><circle cx="12" cy="12" r="10"/><path d="M12 16v-4"/><path d="M12 8h.01"/></svg>
<div class="t n" style="top:721px;right:218px;letter-spacing:0.6px;margin-right:-0.6px;">45.20<i class="sp" style="width:2.4px"></i><i class="pc"><b>%</b></i></div>
<div class="t n" style="top:721px;right:142px;letter-spacing:0.6px;margin-right:-0.6px;">1.14<i class="sp" style="width:2.4px"></i><i class="pc"><b>%</b></i></div>
<svg class="ic" style="left:1154.0px;top:724.0px" width="16" height="16" viewBox="0 0 24 24" fill="none" stroke="#d1d5db" stroke-width="2" stroke-linecap="round" stroke-linejoin="round"><circle cx="12" cy="12" r="10"/><path d="M12 16v-4"/><path d="M12 8h.01"/></svg>
<div class="t n" style="top:721px;right:18px;">712<i class="sp"></i>fs</div>
<div class="t" style="top:765px;left:12px;letter-spacing:0.167px;">Total price for selected levels</div>
<div class="t n" style="top:765px;right:570px;">1<i class="sp"></i>867<i class="sp"></i>082<i class="sp"></i>678<i class="sp"></i>692</div>
<svg class="ic" style="left:726.0px;top:768.0px" width="16" height="16" viewBox="0 0 24 24" fill="none" stroke="#d1d5db" stroke-width="2" stroke-linecap="round" stroke-linejoin="round"><circle cx="12" cy="12" r="10"/><path d="M12 16v-4"/><path d="M12 8h.01"/></svg>
</body></html>
